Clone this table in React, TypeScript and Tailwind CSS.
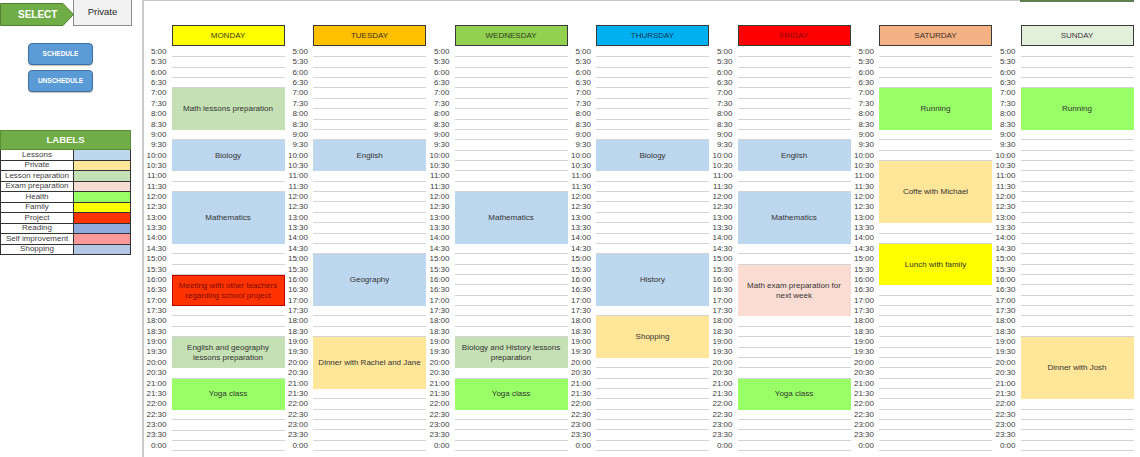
import React from "react";

type Ev = { s: number; n: number; bg: string; text: string; fg?: string; border?: string };
type Day = { name: string; bg: string; fg: string; events: Ev[] };

const ROW = 10.37;

const LESSON = "#bdd7ee";
const PREP = "#c5e0b4";
const HEALTH = "#99ff66";
const PRIVATE = "#ffe699";
const FAMILY = "#ffff00";
const EXAM = "#fbdcd2";

const days: Day[] = [
  {
    name: "MONDAY",
    bg: "#ffff00",
    fg: "#3d3d1a",
    events: [
      { s: 4, n: 4, bg: PREP, text: "Math lessons preparation" },
      { s: 9, n: 3, bg: LESSON, text: "Biology" },
      { s: 14, n: 5, bg: LESSON, text: "Mathematics" },
      { s: 22, n: 3, bg: "#ff3300", text: "Meeting with other teachers regarding school project", fg: "#7a0c00", border: "#c00000" },
      { s: 28, n: 3, bg: PREP, text: "English and geography lessons preparation" },
      { s: 32, n: 3, bg: HEALTH, text: "Yoga class" },
    ],
  },
  {
    name: "TUESDAY",
    bg: "#ffc000",
    fg: "#3d3320",
    events: [
      { s: 9, n: 3, bg: LESSON, text: "English" },
      { s: 20, n: 5, bg: LESSON, text: "Geography" },
      { s: 28, n: 5, bg: PRIVATE, text: "Dinner with Rachel and Jane" },
    ],
  },
  {
    name: "WEDNESDAY",
    bg: "#92d050",
    fg: "#2c3d20",
    events: [
      { s: 14, n: 5, bg: LESSON, text: "Mathematics" },
      { s: 28, n: 3, bg: PREP, text: "Biology and History lessons preparation" },
      { s: 32, n: 3, bg: HEALTH, text: "Yoga class" },
    ],
  },
  {
    name: "THURSDAY",
    bg: "#00b0f0",
    fg: "#0f3550",
    events: [
      { s: 9, n: 3, bg: LESSON, text: "Biology" },
      { s: 20, n: 5, bg: LESSON, text: "History" },
      { s: 26, n: 4, bg: PRIVATE, text: "Shopping" },
    ],
  },
  {
    name: "FRIDAY",
    bg: "#ff0000",
    fg: "#8a0a0a",
    events: [
      { s: 9, n: 3, bg: LESSON, text: "English" },
      { s: 14, n: 5, bg: LESSON, text: "Mathematics" },
      { s: 21, n: 5, bg: EXAM, text: "Math exam preparation for next week" },
      { s: 32, n: 3, bg: HEALTH, text: "Yoga class" },
    ],
  },
  {
    name: "SATURDAY",
    bg: "#f4b183",
    fg: "#3d2e24",
    events: [
      { s: 4, n: 4, bg: HEALTH, text: "Running" },
      { s: 11, n: 6, bg: PRIVATE, text: "Coffe with Michael" },
      { s: 19, n: 4, bg: FAMILY, text: "Lunch with family" },
    ],
  },
  {
    name: "SUNDAY",
    bg: "#e2efda",
    fg: "#3a3a3a",
    events: [
      { s: 4, n: 4, bg: HEALTH, text: "Running" },
      { s: 28, n: 6, bg: PRIVATE, text: "Dinner with Josh" },
    ],
  },
];

const times: string[] = [];
for (let h = 5; h <= 23; h++) {
  times.push(`${h}:00`);
  times.push(`${h}:30`);
}
times.push("0:00");

const labels: { name: string; color: string }[] = [
  { name: "Lessons", color: "#bdd7ee" },
  { name: "Private", color: "#ffe699" },
  { name: "Lesson reparation", color: "#c5e0b4" },
  { name: "Exam preparation", color: "#f8dbd3" },
  { name: "Health", color: "#99ff66" },
  { name: "Family", color: "#ffff00" },
  { name: "Project", color: "#ff3300" },
  { name: "Reading", color: "#8faadc" },
  { name: "Self improvement", color: "#ff9999" },
  { name: "Shopping", color: "#b4c7e7" },
];

function DayColumn({ day, last }: { day: Day; last: boolean }) {
  const items: React.ReactNode[] = [];
  let i = 0;
  while (i < times.length) {
    const ev = day.events.find((e) => e.s === i);
    if (ev) {
      items.push(
        <div
          key={i}
          className="flex items-center justify-center text-center px-[4px] leading-[10px] border"
          style={{
            height: ev.n * ROW,
            backgroundColor: ev.bg,
            color: ev.fg ?? "#333333",
            borderColor: ev.border ?? ev.bg,
          }}
        >
          {ev.text}
        </div>
      );
      i += ev.n;
    } else {
      items.push(<div key={i} className="h-[10.37px] border-b border-[#d4d4d4]" />);
      i += 1;
    }
  }
  return (
    <div className="flex flex-col">
      <div className="flex h-[25px] border-t border-[#c8c8c8]">
        <div className="w-[28.5px]" />
        <div className={last ? "w-[114px] -mt-px border-t-2 border-[#5f7f4f]" : "w-[113px]"} />
      </div>
      <div className="flex">
        <div className="w-[28.5px]" />
        <div
          className="w-[113px] h-[21px] border border-[#3a3a3a] flex items-center justify-center"
          style={{ backgroundColor: day.bg, color: day.fg }}
        >
          {day.name}
        </div>
      </div>
      <div className="h-px" />
      <div className="flex">
        <div className="w-[28.5px] pr-[5px] flex flex-col text-right text-[#404040]">
          {times.map((t) => (
            <div key={t} className="h-[10.37px] leading-[10.37px]">
              {t}
            </div>
          ))}
        </div>
        <div className="w-[113px] flex flex-col">{items}</div>
      </div>
    </div>
  );
}

export default function App() {
  return (
    <div
      className="w-[1140px] h-[457px] bg-white flex overflow-hidden text-[8px]"
      style={{ fontFamily: '"Liberation Sans", Arial, sans-serif' }}
    >
      <div className="w-[144px] shrink-0 border-r-2 border-[#cacaca] flex flex-col">
        <div className="flex h-[26px]">
          <div className="relative w-[74px] h-[23px] mt-[3px] flex items-center">
            <svg className="absolute inset-0" width="74" height="23" viewBox="0 0 74 23">
              <polygon points="0.5,0.5 63,0.5 73.5,11.5 63,22.5 0.5,22.5" fill="#70ad47" stroke="#507e32" strokeWidth="1" />
            </svg>
            <span className="relative pl-[18px] text-white font-bold text-[10px]">SELECT</span>
          </div>
          <div className="w-[59px] h-[26px] -ml-px bg-[#f2f2f2] border border-[#8c8c8c] border-t-0 flex items-center justify-center text-[9.5px] text-[#262626]">
            Private
          </div>
        </div>
        <div className="pl-[28px] pt-[17px] flex flex-col gap-[5px]">
          <div className="w-[65px] h-[22px] rounded-[4px] bg-[#5b9bd5] border border-[#41719c] flex items-center justify-center text-white font-bold text-[6.5px] shadow-[0_1px_1px_rgba(0,0,0,0.25)]">
            SCHEDULE
          </div>
          <div className="w-[65px] h-[22px] rounded-[4px] bg-[#5b9bd5] border border-[#41719c] flex items-center justify-center text-white font-bold text-[6.5px] shadow-[0_1px_1px_rgba(0,0,0,0.25)]">
            UNSCHEDULE
          </div>
        </div>
        <div className="mt-[38px] w-[131px]">
          <div className="h-[20px] bg-[#70ad47] border border-[#5a8f39] flex items-center justify-center text-white font-bold text-[9.5px]">
            LABELS
          </div>
          <div className="border-l border-r border-[#333]">
            {labels.map((l) => (
              <div key={l.name} className="flex h-[10.5px] border-b border-[#333]">
                <div className="w-[73px] border-r border-[#333] flex items-center justify-center text-[#404040] leading-none">
                  {l.name}
                </div>
                <div className="flex-1" style={{ backgroundColor: l.color }} />
              </div>
            ))}
          </div>
        </div>
      </div>
      <div className="flex-1 -ml-px grid grid-cols-[repeat(7,141.5px)]">
        {days.map((d, idx) => (
          <DayColumn key={d.name} day={d} last={idx === days.length - 1} />
        ))}
      </div>
    </div>
  );
}
